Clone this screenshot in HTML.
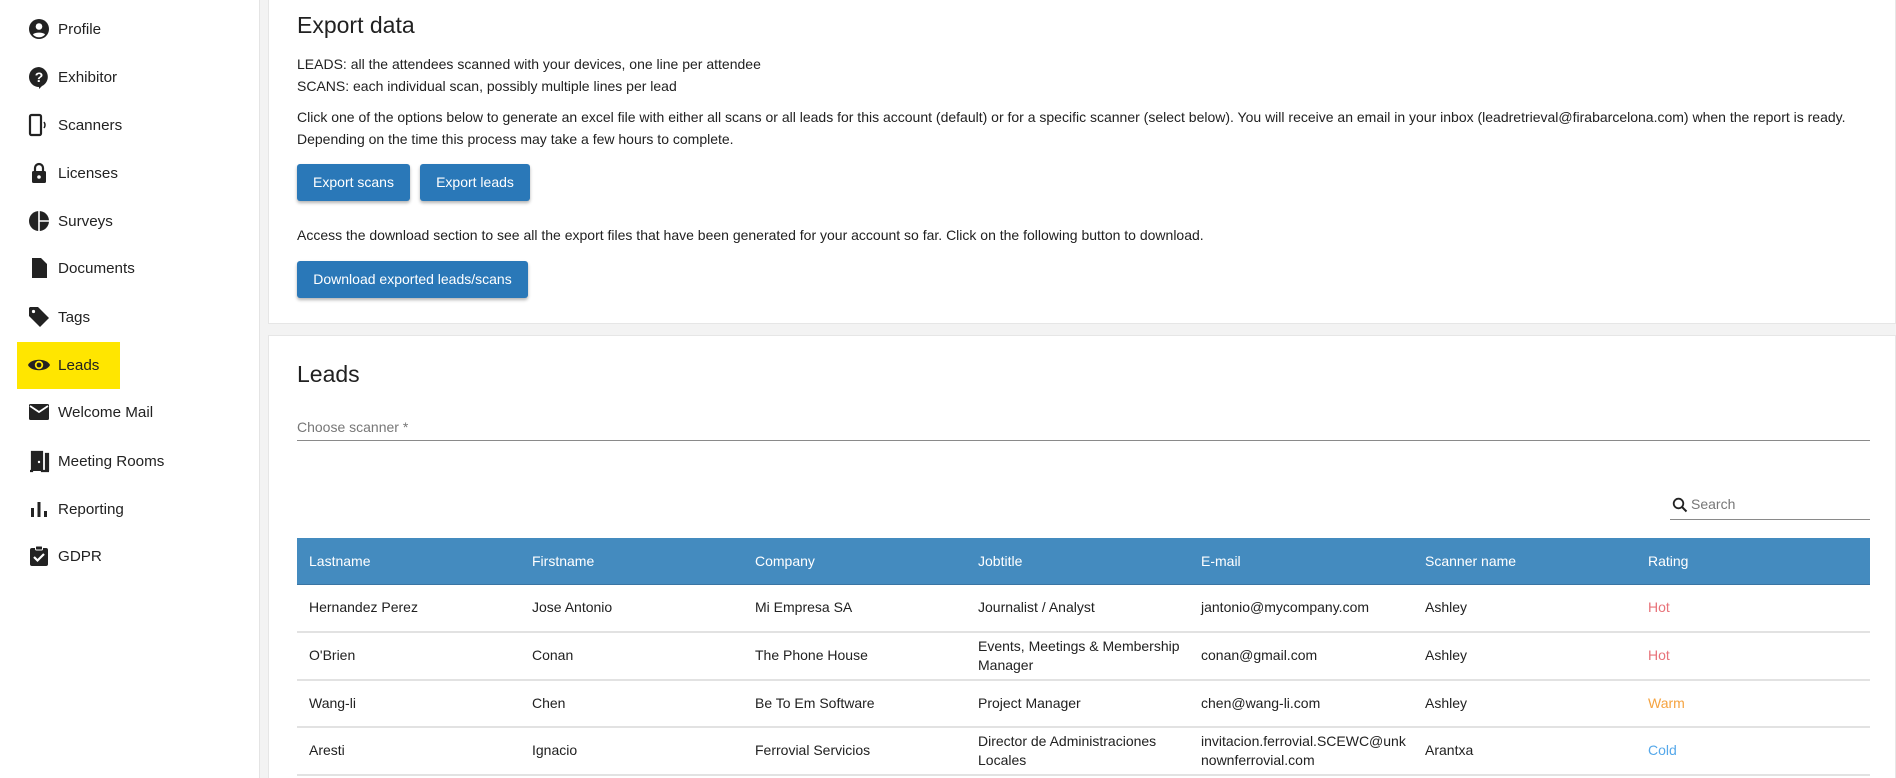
<!DOCTYPE html>
<html style="overflow:hidden;height:778px"><head><meta charset="utf-8"><style>
*{margin:0;padding:0;box-sizing:border-box}
body{width:1896px;height:778px;overflow:hidden;background:#f3f3f3;font-family:"Liberation Sans",Arial,sans-serif;color:#212121;position:relative}
.side{position:absolute;left:0;top:0;width:260px;height:778px;background:#fff;border-right:1px solid #e4e4e4}
.item{position:absolute;left:0;width:260px;height:40px;font-size:15.2px;color:#222}
.item svg{position:absolute;left:27px;top:8px;width:24px;height:24px}
.item span{position:absolute;left:58px;top:12px}
.hl{position:absolute;left:17px;top:342px;width:103px;height:47px;background:#ffe600}
.card{position:absolute;left:268px;right:0;background:#fff;border:1px solid #e6e6e6}
.t{position:absolute;left:297px;white-space:nowrap;font-size:14px}
.btn{position:absolute;background:#2a78b8;color:#fff;font-size:14px;border-radius:3px;box-shadow:0 2px 3px rgba(0,0,0,.3);text-align:center;line-height:37px}
table{position:absolute;left:297px;top:538px;width:1573px;border-collapse:collapse;font-size:14px}
th{background:#448bbf;color:#fff;font-weight:normal;text-align:left;height:46px;padding-left:12px;border-bottom:1px solid #3a75a3}
td{padding-left:12px;border-bottom:2px solid #e2e2e2;line-height:19.5px}
</style></head><body>
<div class="side">
<div class="hl"></div>
<div class="item" style="top:9px"><svg viewBox="0 0 24 24"><circle cx="12" cy="12" r="10" fill="#222"/><circle cx="12" cy="9.5" r="3.3" fill="#fff"/><path d="M6 17.5c1.5-2.5 10.5-2.5 12 0c-1.5 2-4 2.8-6 2.8s-4.5-.8-6-2.8z" fill="#fff"/></svg><span>Profile</span></div>
<div class="item" style="top:57px"><svg viewBox="0 0 24 24"><path d="M12 2a10 10 0 1 0 0 20l0 2 3-3a10 10 0 0 0-3-19z" fill="#222"/><text x="12" y="17" font-size="14" font-weight="bold" fill="#fff" text-anchor="middle" font-family="Liberation Sans">?</text></svg><span>Exhibitor</span></div>
<div class="item" style="top:105px"><svg viewBox="0 0 24 24"><rect x="3" y="2" width="11" height="20" rx="1.5" fill="none" stroke="#222" stroke-width="2.2"/><path d="M17 9q2 3 0 6" fill="none" stroke="#222" stroke-width="1.5"/></svg><span>Scanners</span></div>
<div class="item" style="top:153px"><svg viewBox="0 0 24 24"><path d="M8 10V7a4 4 0 0 1 8 0v3" fill="none" stroke="#222" stroke-width="2.2"/><rect x="5" y="10" width="14" height="12" rx="1.5" fill="#222"/><circle cx="12" cy="16" r="1.8" fill="#fff"/></svg><span>Licenses</span></div>
<div class="item" style="top:201px"><svg viewBox="0 0 24 24"><circle cx="12" cy="12" r="10" fill="#222"/><path d="M12 2v20M12 12h10" stroke="#fff" stroke-width="1.6"/></svg><span>Surveys</span></div>
<div class="item" style="top:248px"><svg viewBox="0 0 24 24"><path d="M5 2h9l6 6v14H5z" fill="#222"/></svg><span>Documents</span></div>
<div class="item" style="top:297px"><svg viewBox="0 0 24 24"><path d="M2 3v8l11 11 9-9L11 2H3z" fill="#222"/><circle cx="6.5" cy="6.5" r="1.6" fill="#fff"/></svg><span>Tags</span></div>
<div class="item" style="top:345px"><svg viewBox="0 0 24 24"><path d="M1 12C4 5 20 5 23 12C20 19 4 19 1 12z" fill="#222"/><circle cx="12" cy="12" r="4.2" fill="#ffe600"/><circle cx="12" cy="12" r="2.4" fill="#222"/></svg><span>Leads</span></div>
<div class="item" style="top:392px"><svg viewBox="0 0 24 24"><rect x="2" y="4" width="20" height="16" rx="1.5" fill="#222"/><path d="M3 6l9 6 9-6" fill="none" stroke="#fff" stroke-width="1.8"/></svg><span>Welcome Mail</span></div>
<div class="item" style="top:441px"><svg viewBox="0 0 24 24"><path d="M3 22h2V3h10v19h4V5h2v17h1" fill="none" stroke="#222" stroke-width="2.2"/><rect x="5" y="3" width="10" height="19" fill="#222"/><circle cx="12" cy="13" r="1.2" fill="#fff"/></svg><span>Meeting Rooms</span></div>
<div class="item" style="top:489px"><svg viewBox="0 0 24 24"><rect x="4" y="11" width="3" height="9" fill="#222"/><rect x="10.5" y="5" width="3" height="15" fill="#222"/><rect x="17" y="14" width="3" height="6" fill="#222"/></svg><span>Reporting</span></div>
<div class="item" style="top:536px"><svg viewBox="0 0 24 24"><rect x="3" y="4" width="18" height="18" rx="2" fill="#222"/><rect x="8.5" y="2" width="7" height="4" rx="1" fill="#222" stroke="#fff" stroke-width="1"/><path d="M7 13l3.5 3.5L17 10" fill="none" stroke="#fff" stroke-width="2.2"/></svg><span>GDPR</span></div>
</div>

<div class="card" style="top:-2px;height:326px"></div>
<div class="t" style="top:12px;font-size:23px">Export data</div>
<div class="t" style="top:56px">LEADS: all the attendees scanned with your devices, one line per attendee</div>
<div class="t" style="top:78px">SCANS: each individual scan, possibly multiple lines per lead</div>
<div class="t" style="top:109px">Click one of the options below to generate an excel file with either all scans or all leads for this account (default) or for a specific scanner (select below). You will receive an email in your inbox (leadretrieval@firabarcelona.com) when the report is ready.</div>
<div class="t" style="top:131px">Depending on the time this process may take a few hours to complete.</div>
<div class="btn" style="left:297px;top:164px;width:113px">Export scans</div>
<div class="btn" style="left:420px;top:164px;width:110px">Export leads</div>
<div class="t" style="top:227px">Access the download section to see all the export files that have been generated for your account so far. Click on the following button to download.</div>
<div class="btn" style="left:297px;top:261px;width:231px">Download exported leads/scans</div>

<div class="card" style="top:335px;height:443px;border-bottom:none"></div>
<div class="t" style="top:361px;font-size:23px">Leads</div>
<div class="t" style="top:419px;font-size:14px;color:#777">Choose scanner *</div>
<div style="position:absolute;left:297px;top:440px;width:1573px;height:1px;background:#8a8a8a"></div>
<svg style="position:absolute;left:1672px;top:497px" width="16" height="16" viewBox="0 0 16 16"><circle cx="6.5" cy="6.5" r="4.8" fill="none" stroke="#222" stroke-width="1.8"/><path d="M10 10l4.5 4.5" stroke="#222" stroke-width="2"/></svg>
<div class="t" style="left:1691px;top:496px;font-size:14px;color:#777">Search</div>
<div style="position:absolute;left:1670px;top:519px;width:200px;height:1px;background:#8a8a8a"></div>

<table>
<colgroup><col style="width:223px"><col style="width:223px"><col style="width:223px"><col style="width:223px"><col style="width:224px"><col style="width:223px"><col></colgroup>
<tr><th>Lastname</th><th>Firstname</th><th>Company</th><th>Jobtitle</th><th>E-mail</th><th>Scanner name</th><th>Rating</th></tr>
<tr style="height:48px"><td>Hernandez Perez</td><td>Jose Antonio</td><td>Mi Empresa SA</td><td>Journalist / Analyst</td><td>jantonio@mycompany.com</td><td>Ashley</td><td style="color:#e8737a">Hot</td></tr>
<tr style="height:48px"><td>O'Brien</td><td>Conan</td><td>The Phone House</td><td>Events, Meetings &amp; Membership Manager</td><td>conan@gmail.com</td><td>Ashley</td><td style="color:#e8737a">Hot</td></tr>
<tr style="height:47px"><td>Wang-li</td><td>Chen</td><td>Be To Em Software</td><td>Project Manager</td><td>chen@wang-li.com</td><td>Ashley</td><td style="color:#f5a340">Warm</td></tr>
<tr style="height:48px"><td>Aresti</td><td>Ignacio</td><td>Ferrovial Servicios</td><td>Director de Administraciones Locales</td><td style="word-break:break-all">invitacion.ferrovial.SCEWC@unknownferrovial.com</td><td>Arantxa</td><td style="color:#55a8ea">Cold</td></tr>
</table>
</body></html>
